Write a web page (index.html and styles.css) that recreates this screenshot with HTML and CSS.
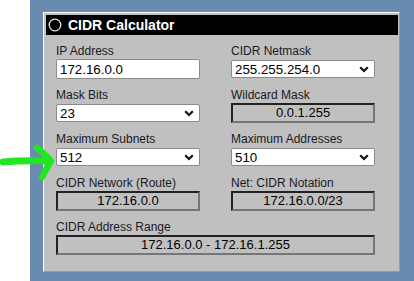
FILE: index.html
```html
<!DOCTYPE html>
<html lang="en">
<head>
    <meta charset="UTF-8">
    <meta name="viewport" content="width=device-width, initial-scale=1.0">
    <title>CIDR Calculator</title>
    <link rel="stylesheet" href="styles.css">
</head>
<body>

    <div class="desk">
        <div class="panel">
            <div class="titlebar">
                <svg class="title-icon" width="14" height="14" viewBox="0 0 14 14">
                    <circle cx="7" cy="7" r="5.8" fill="none" stroke="#e8e8e8" stroke-width="1.3"/>
                </svg>
                <span>CIDR Calculator</span>
            </div>

            <div class="calc">
                <div class="field">
                    <label>IP Address</label>
                    <input type="text" class="txt" value="172.16.0.0">
                </div>
                <div class="field">
                    <label>CIDR Netmask</label>
                    <div class="sel">
                        <select><option>255.255.254.0</option></select>
                        <svg class="chev" width="10" height="7" viewBox="0 0 10 7"><polyline points="1.2,1.2 5,5 8.8,1.2" fill="none" stroke="#111" stroke-width="2.2"/></svg>
                    </div>
                </div>

                <div class="field">
                    <label>Mask Bits</label>
                    <div class="sel">
                        <select><option>23</option></select>
                        <svg class="chev" width="10" height="7" viewBox="0 0 10 7"><polyline points="1.2,1.2 5,5 8.8,1.2" fill="none" stroke="#111" stroke-width="2.2"/></svg>
                    </div>
                </div>
                <div class="field">
                    <label>Wildcard Mask</label>
                    <div class="out">0.0.1.255</div>
                </div>

                <div class="field">
                    <label>Maximum Subnets</label>
                    <div class="sel">
                        <select><option>512</option></select>
                        <svg class="chev" width="10" height="7" viewBox="0 0 10 7"><polyline points="1.2,1.2 5,5 8.8,1.2" fill="none" stroke="#111" stroke-width="2.2"/></svg>
                    </div>
                </div>
                <div class="field">
                    <label>Maximum Addresses</label>
                    <div class="sel">
                        <select><option>510</option></select>
                        <svg class="chev" width="10" height="7" viewBox="0 0 10 7"><polyline points="1.2,1.2 5,5 8.8,1.2" fill="none" stroke="#111" stroke-width="2.2"/></svg>
                    </div>
                </div>

                <div class="field">
                    <label>CIDR Network (Route)</label>
                    <div class="out">172.16.0.0</div>
                </div>
                <div class="field">
                    <label>Net: CIDR Notation</label>
                    <div class="out">172.16.0.0/23</div>
                </div>

                <div class="field wide">
                    <label>CIDR Address Range</label>
                    <div class="out">172.16.0.0 - 172.16.1.255</div>
                </div>
            </div>
        </div>
    </div>

    <!-- hand drawn marker on the screenshot -->
    <svg class="arrow" width="60" height="60" viewBox="0 0 60 60">
        <path d="M3,31 Q22,29 49,30" fill="none" stroke="#22e622" stroke-width="7" stroke-linecap="round"/>
        <path d="M37,17 Q46,24 51,30 Q46,38 42,46" fill="none" stroke="#22e622" stroke-width="6.5" stroke-linecap="round" stroke-linejoin="round"/>
    </svg>

</body>
</html>
```

FILE: styles.css
```css
* {
    margin: 0;
    padding: 0;
    box-sizing: border-box;
}

body {
    background-color: #ffffff;
    font-family: "Liberation Sans", Arial, sans-serif;
    width: 414px;
    height: 281px;
    overflow: hidden;
    position: relative;
}

/* blue page area */
.desk {
    margin-left: 30px;
    height: 281px;
    background-color: #6a8bb0;
    padding: 12px 14px 9px 13px;
}

.panel {
    width: 357px;
    height: 260px;
    background-color: #c0c0c0;
    border-top: 1px solid #ffffff;
    border-left: 1px solid #ffffff;
    border-right: 1px solid #9a9a9a;
    border-bottom: 1px solid #9a9a9a;
    padding: 2px 1px 2px 2px;
}

.titlebar {
    height: 20px;
    background-color: #000000;
    color: #ffffff;
    display: flex;
    align-items: center;
    padding-left: 2px;
    font-size: 14px;
    font-weight: bold;
}

.title-icon {
    margin-right: 6px;
}

/* form grid */
.calc {
    display: grid;
    grid-template-columns: 144px 144px;
    column-gap: 31px;
    row-gap: 9px;
    padding: 9px 0 0 10px;
}

.field label {
    display: block;
    font-size: 12px;
    line-height: 15px;
    color: #1a1a22;
}

.wide {
    grid-column: 1 / span 2;
}

.txt {
    display: block;
    width: 100%;
    height: 20px;
    border: 1px solid #8a8a8a;
    border-radius: 2px;
    background: #ffffff;
    font-family: inherit;
    font-size: 13.33px;
    color: #000;
    padding: 0 3px;
    outline: none;
    caret-color: transparent;
}

.sel {
    position: relative;
    height: 20px;
    display: flex;
    align-items: center;
}

.sel select {
    appearance: none;
    -webkit-appearance: none;
    width: 100%;
    height: 18px;
    border: 1px solid #8a8a8a;
    border-radius: 2px;
    background: #ffffff;
    font-family: inherit;
    font-size: 13.33px;
    color: #000;
    padding: 0 3px;
    outline: none;
}

.chev {
    position: absolute;
    right: 6px;
    top: 7px;
    pointer-events: none;
}

/* read only result boxes */
.out {
    height: 20px;
    border: 2px solid;
    border-color: #222222 #767676 #767676 #222222;
    text-align: center;
    font-size: 13px;
    line-height: 16px;
    color: #000;
}

.arrow {
    position: absolute;
    left: 0;
    top: 131px;
}
```
